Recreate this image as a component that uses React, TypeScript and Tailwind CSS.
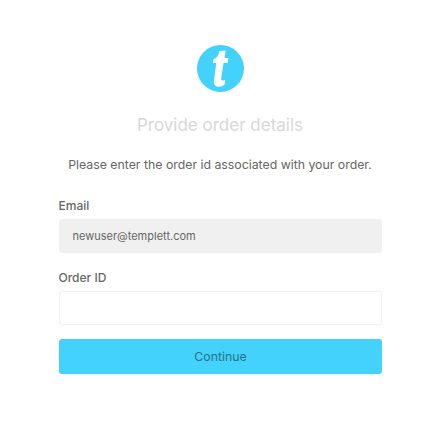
import React from "react";

function Logo() {
  return (
    <svg width="47" height="47" viewBox="0 0 47 47" className="block">
      <circle cx="23.5" cy="23.5" r="23.5" fill="#42d2fb" />
      <path
        d="M22.5 6 L28.7 5.5 L27.5 13 L31.5 13 L30.5 18 L26.6 18 L24.2 33 C24 35.5 25.2 36 28.3 34.8 L27.6 39.5 C23.5 42.8 16.6 43 16.8 36.5 L19.3 18 L15.8 18 L16.6 14 C19.6 13 21.8 10 22.5 6 Z"
        fill="#ffffff"
      />
    </svg>
  );
}

function Field({ label, value, filled }: { label: string; value?: string; filled?: boolean }) {
  return (
    <div className="flex flex-col">
      <label className="text-[12px] leading-[14px] font-medium text-[#666] mb-[6px]">{label}</label>
      <div
        className={
          filled
            ? "h-[34px] rounded-[3px] bg-[#f0f0f0] border border-[#f0f0f0] px-[13px] flex items-center text-[11px] text-[#666]"
            : "h-[34px] rounded-[3px] bg-white border border-[#f0f0f0] px-[13px] flex items-center text-[11px] text-[#666]"
        }
      >
        {value}
      </div>
    </div>
  );
}

export default function App() {
  return (
    <div className="w-[440px] h-[440px] bg-white flex flex-col items-center pt-[45px] font-['Inter',sans-serif]">
      <Logo />
      <h1 className="mt-[22px] text-[17px] leading-[22px] font-normal text-[#d8d8d8]">Provide order details</h1>
      <p className="mt-[19px] text-[12.3px] leading-[20px] text-[#666]">
        Please enter the order id associated with your order.
      </p>
      <div className="w-[323px] mt-[24px] flex flex-col gap-[18px]">
        <Field label="Email" value="newuser@templett.com" filled />
        <Field label="Order ID" />
        <button className="h-[35px] -mt-[4px] pt-[2px] pl-px rounded-[3px] bg-[#42d2fb] text-[12.3px] text-[#2a7189]">Continue</button>
      </div>
    </div>
  );
}
